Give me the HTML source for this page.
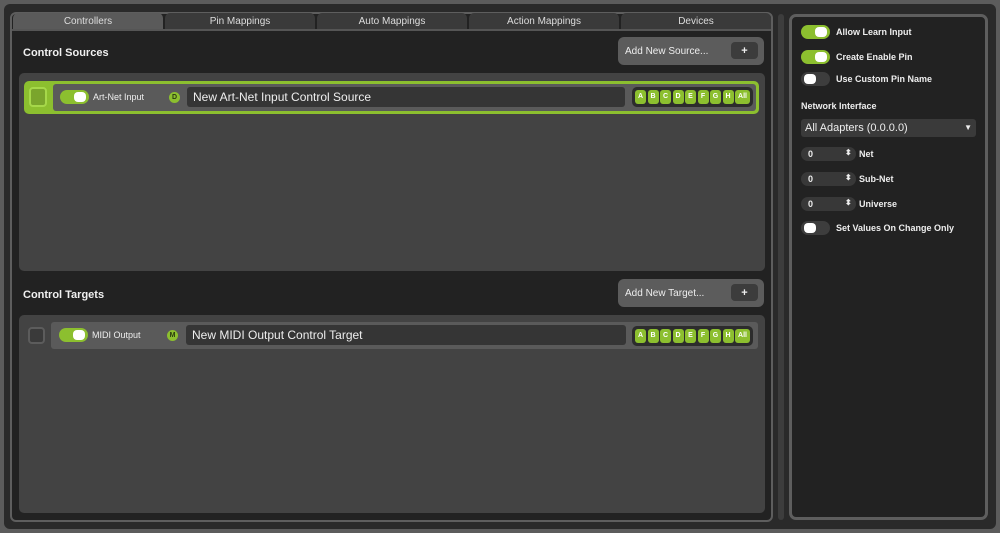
<!DOCTYPE html><html><head><style>
*{box-sizing:border-box;margin:0;padding:0}
body{width:1000px;height:533px;background:#5c5c5c;font-family:"Liberation Sans",sans-serif;font-size:11px;color:#eee;position:relative;overflow:hidden}
.a{position:absolute}
.frame{left:4px;top:4px;width:992px;height:525px;background:#2a2a2a;border-radius:6px}
.left{left:10px;top:12px;width:763px;height:510px;border:2px solid #5e5e5e;border-radius:6px;background:#222}
.tab{top:13px;height:16px;background:#3a3a3a;border-radius:5px 5px 0 0;text-align:center;font-size:10px;line-height:16px;color:#ddd;padding-top:1px}
.h{font-weight:bold;font-size:11px;color:#f0f0f0}
.btn{background:#5c5c5c;border-radius:6px;font-size:10px;color:#eee;padding-left:7px;display:flex;align-items:center}
.plus{position:absolute;right:6px;top:5px;width:27px;height:17px;background:#3c3c3c;border-radius:4px;display:flex;align-items:center;justify-content:center;font-weight:bold;font-size:11px}
.box{background:#434343;border-radius:5px}
.tog{width:29px;height:14px;background:#8cbf2f;border-radius:7px;position:absolute}
.tog::after{content:"";position:absolute;right:3px;top:2px;width:12px;height:10px;background:#fff;border-radius:4px}
.togoff{width:29px;height:14px;background:#3d3d3d;border-radius:7px;position:absolute}
.togoff::after{content:"";position:absolute;left:3px;top:2px;width:12px;height:10px;background:#fff;border-radius:4px}
.name{background:#353535;border-radius:3px;font-size:12px;line-height:20px;padding-left:6px;color:#eee}
.letters{background:#2c2c2c;border-radius:5px;display:flex;gap:1.5px;padding:3px}
.letters span{background:#8cbf2f;border-radius:3px;width:11px;height:14px;font-size:7px;font-weight:bold;text-align:center;line-height:14px;color:#fff}
.letters span.all{width:15px}
.dot{width:11px;height:11px;border-radius:50%;background:#8cbf2f;color:#2a3a10;font-size:7px;text-align:center;line-height:11px;font-weight:bold}
.right{left:789px;top:14px;width:199px;height:506px;border:3px solid #5e5e5e;border-radius:7px;background:#222}
.lbl{font-size:9px;font-weight:bold;color:#eee}
.num{width:55px;height:14px;background:#383838;border-radius:7px;font-size:9px;font-weight:bold;line-height:14px;padding-left:7px}
</style></head><body>
<div class="a frame"></div>
<div class="a left"></div>
<div class="a tab" style="left:13px;width:150px;background:#5a5a5a">Controllers</div>
<div class="a tab" style="left:165px;width:150px">Pin Mappings</div>
<div class="a tab" style="left:317px;width:150px">Auto Mappings</div>
<div class="a tab" style="left:469px;width:150px">Action Mappings</div>
<div class="a tab" style="left:621px;width:150px">Devices</div>
<div class="a" style="left:12px;top:29px;width:759px;height:2px;background:#555"></div>
<div class="a h" style="left:23px;top:47px">Control Sources</div>
<div class="a btn" style="left:618px;top:37px;width:146px;height:28px">Add New Source...<div class="plus">+</div></div>
<div class="a box" style="left:19px;top:73px;width:746px;height:198px"></div>
<div class="a" style="left:24px;top:81px;width:735px;height:33px;background:#8cbf2f;border-radius:5px"></div>
<div class="a" style="left:29px;top:87px;width:18px;height:20px;background:#7aa52c;border:2px solid #a6d84a;border-radius:4px"></div>
<div class="a" style="left:53px;top:84px;width:703px;height:27px;background:#5a5a5a;border-radius:3px"></div>
<div class="tog" style="left:60px;top:90px"></div>
<div class="a" style="left:93px;top:92px;font-size:9px">Art-Net Input</div>
<div class="a dot" style="left:169px;top:92px">D</div>
<div class="a name" style="left:187px;top:87px;width:438px">New Art-Net Input Control Source</div>
<div class="a letters" style="left:632px;top:87px"><span>A</span><span>B</span><span>C</span><span>D</span><span>E</span><span>F</span><span>G</span><span>H</span><span class="all">All</span></div>
<div class="a h" style="left:23px;top:289px">Control Targets</div>
<div class="a btn" style="left:618px;top:279px;width:146px;height:28px">Add New Target...<div class="plus">+</div></div>
<div class="a box" style="left:19px;top:315px;width:746px;height:198px"></div>
<div class="a" style="left:28px;top:327px;width:17px;height:17px;border:2px solid #5c5c5c;border-radius:4px;background:#3a3a3a"></div>
<div class="a" style="left:51px;top:322px;width:707px;height:27px;background:#5a5a5a;border-radius:3px"></div>
<div class="tog" style="left:59px;top:328px"></div>
<div class="a" style="left:92px;top:330px;font-size:9px">MIDI Output</div>
<div class="a dot" style="left:167px;top:330px">M</div>
<div class="a name" style="left:186px;top:325px;width:440px">New MIDI Output Control Target</div>
<div class="a letters" style="left:632px;top:326px"><span>A</span><span>B</span><span>C</span><span>D</span><span>E</span><span>F</span><span>G</span><span>H</span><span class="all">All</span></div>
<div class="a" style="left:778px;top:14px;width:6px;height:506px;background:#3d3d3d;border-radius:3px"></div>
<div class="a right"></div>
<div class="tog" style="left:801px;top:25px"></div><div class="a lbl" style="left:836px;top:27px">Allow Learn Input</div>
<div class="tog" style="left:801px;top:50px"></div><div class="a lbl" style="left:836px;top:52px">Create Enable Pin</div>
<div class="togoff" style="left:801px;top:72px"></div><div class="a lbl" style="left:836px;top:74px">Use Custom Pin Name</div>
<div class="a lbl" style="left:801px;top:101px">Network Interface</div>
<div class="a" style="left:801px;top:119px;width:175px;height:18px;background:#3a3a3a;border-radius:3px;font-size:11px;line-height:18px;padding-left:4px">All Adapters (0.0.0.0)<span style="position:absolute;right:4px;top:0;font-size:8px">▼</span></div>
<div class="a num" style="left:801px;top:147px">0<span style="position:absolute;left:44px;top:-1px;font-size:8px">⬍</span></div><div class="a lbl" style="left:859px;top:149px">Net</div>
<div class="a num" style="left:801px;top:172px">0<span style="position:absolute;left:44px;top:-1px;font-size:8px">⬍</span></div><div class="a lbl" style="left:859px;top:174px">Sub-Net</div>
<div class="a num" style="left:801px;top:197px">0<span style="position:absolute;left:44px;top:-1px;font-size:8px">⬍</span></div><div class="a lbl" style="left:859px;top:199px">Universe</div>
<div class="togoff" style="left:801px;top:221px"></div><div class="a lbl" style="left:836px;top:223px">Set Values On Change Only</div>
</body></html>
